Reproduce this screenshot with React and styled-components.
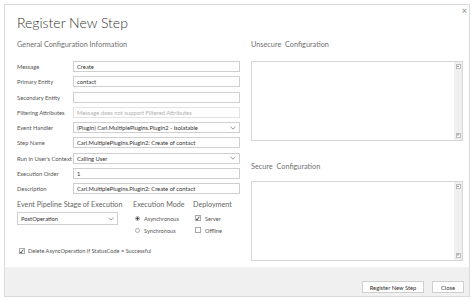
import React from 'react'
import styled, { createGlobalStyle } from 'styled-components'

const FIELDS = [
  { label: 'Message', value: 'Create' },
  { label: 'Primary Entity', value: 'contact' },
  { label: 'Secondary Entity', value: '' },
  { label: 'Filtering Attributes', value: 'Message does not support Filtered Attributes', disabled: true },
  { label: 'Event Handler', value: '(Plugin) Carl.MultiplePlugins.Plugin2 - Isolatable', select: true },
  { label: 'Step Name', value: 'Carl.MultiplePlugins.Plugin2: Create of contact' },
  { label: "Run in User's Context", value: 'Calling User', select: true },
  { label: 'Execution Order', value: '1' },
  { label: 'Description', value: 'Carl.MultiplePlugins.Plugin2: Create of contact' },
]

const GlobalStyle = createGlobalStyle`
  body {
    margin: 0;
    background: #fff;
    font-family: Lato, "Open Sans", sans-serif;
    color: #333;
  }
`

const Chevron = () => (
  <svg width="6" height="4" viewBox="0 0 6 4">
    <path d="M0.5 0.8 L3 3.2 L5.5 0.8" fill="none" stroke="#777" strokeWidth="0.8" />
  </svg>
)

const App = () => {
  return (
    <Page>
      <GlobalStyle />
      <Dialog>
        <CloseX>×</CloseX>
        <Header>
          <Title>Register New Step</Title>
        </Header>
        <Body>
          <Column>
            <SectionTitle>General Configuration Information</SectionTitle>
            <Rows>
              {FIELDS.map((f) => (
                <Row key={f.label}>
                  <Label>{f.label}</Label>
                  <Field disabled={f.disabled}>
                    <span>{f.value}</span>
                    {f.select && <Chevron />}
                  </Field>
                </Row>
              ))}
            </Rows>
            <Options>
              <OptionGroup>
                <GroupTitle>Event Pipeline Stage of Execution</GroupTitle>
                <StageSelect>
                  <span>PostOperation</span>
                  <Chevron />
                </StageSelect>
              </OptionGroup>
              <OptionGroup>
                <GroupTitle>Execution Mode</GroupTitle>
                <Choice><Radio checked />Asynchronous</Choice>
                <Choice><Radio />Synchronous</Choice>
              </OptionGroup>
              <OptionGroup>
                <GroupTitle>Deployment</GroupTitle>
                <Choice><Check checked>✓</Check>Server</Choice>
                <Choice><Check />Offline</Choice>
              </OptionGroup>
            </Options>
            <DeleteRow>
              <Check checked>✓</Check>
              Delete AsyncOperation if StatusCode = Successful
            </DeleteRow>
          </Column>
          <Column>
            <SectionTitle>Unsecure&nbsp; Configuration</SectionTitle>
            <TextArea>
              <ScrollTrack>
                <ScrollArrow>▲</ScrollArrow>
                <ScrollArrow>▼</ScrollArrow>
              </ScrollTrack>
            </TextArea>
            <SectionTitle $top={21} $bottom={9}>Secure&nbsp; Configuration</SectionTitle>
            <TextArea>
              <ScrollTrack>
                <ScrollArrow>▲</ScrollArrow>
                <ScrollArrow>▼</ScrollArrow>
              </ScrollTrack>
            </TextArea>
          </Column>
        </Body>
        <Footer>
          <Button $width={62}>Register New Step</Button>
          <Button $width={32}>Close</Button>
        </Footer>
      </Dialog>
    </Page>
  )
}

const Page = styled.div`
  padding: 4px;
`

const Dialog = styled.div`
  position: relative;
  width: 466px;
  height: 293px;
  box-sizing: border-box;
  border: 1px solid #dadada;
  display: flex;
  flex-direction: column;
  background: #fff;
`

const CloseX = styled.div`
  position: absolute;
  top: 1px;
  right: 2px;
  font-size: 9px;
  line-height: 10px;
  color: #888;
`

const Header = styled.div`
  padding: 9px 0 0 12px;
`

const Title = styled.h1`
  margin: 0;
  font-size: 14px;
  line-height: 18px;
  font-weight: 300;
  color: #333;
`

const Body = styled.div`
  display: grid;
  grid-template-columns: 223px 212px;
  column-gap: 11px;
  padding: 0 6px 0 12px;
`

const Column = styled.div`
  display: flex;
  flex-direction: column;
`

const SectionTitle = styled.div`
  margin-top: ${(p) => p.$top ?? 8}px;
  margin-bottom: ${(p) => p.$bottom ?? 11}px;
  font-size: 7.3px;
  line-height: 10px;
  color: #707070;
  white-space: nowrap;
`

const Rows = styled.div`
  display: flex;
  flex-direction: column;
  gap: 4.3px;
`

const Row = styled.div`
  display: grid;
  grid-template-columns: 56px 167px;
  align-items: center;
  height: 11px;
`

const Label = styled.div`
  font-size: 5.8px;
  color: #555;
  white-space: nowrap;
`

const Field = styled.div`
  box-sizing: border-box;
  height: 11px;
  border: 1px solid ${(p) => (p.disabled ? '#e2e2e2' : '#cfcfcf')};
  padding: 0 3px 0 3px;
  display: flex;
  align-items: center;
  justify-content: space-between;
  font-size: 5.8px;
  color: ${(p) => (p.disabled ? '#b0b0b0' : '#333')};
  white-space: nowrap;
  overflow: hidden;
`

const Options = styled.div`
  display: grid;
  grid-template-columns: 116px 60px 1fr;
  margin-top: 6px;
`

const OptionGroup = styled.div`
  display: flex;
  flex-direction: column;
`

const GroupTitle = styled.div`
  font-size: 7.2px;
  line-height: 10px;
  color: #666;
  white-space: nowrap;
  margin-bottom: 2px;
`

const StageSelect = styled(Field)`
  width: 101px;
  height: 13px;
`

const Choice = styled.div`
  display: flex;
  align-items: center;
  gap: 4px;
  height: 12px;
  padding-left: 2px;
  font-size: 5.6px;
  color: #555;
`

const Radio = styled.span`
  width: 5px;
  height: 5px;
  box-sizing: border-box;
  border-radius: 50%;
  border: 1px solid #aaa;
  background: ${(p) => (p.checked ? 'radial-gradient(circle, #333 45%, #fff 55%)' : '#fff')};
`

const Check = styled.span`
  width: 6px;
  height: 6px;
  box-sizing: border-box;
  border: 1px solid #aaa;
  display: flex;
  align-items: center;
  justify-content: center;
  font-size: 7px;
  line-height: 6px;
  color: #222;
`

const DeleteRow = styled.div`
  display: flex;
  align-items: center;
  gap: 3px;
  margin-top: 11px;
  padding-left: 2px;
  font-size: 5.6px;
  color: #555;
`

const TextArea = styled.div`
  box-sizing: border-box;
  height: 80px;
  border: 1px solid #d6d6d6;
  display: flex;
  justify-content: flex-end;
`

const ScrollTrack = styled.div`
  width: 8px;
  background: #efefef;
  display: flex;
  flex-direction: column;
  justify-content: space-between;
  align-items: center;
  padding: 2px 0;
`

const ScrollArrow = styled.span`
  width: 5px;
  height: 5px;
  box-sizing: border-box;
  border: 1px solid #bbb;
  background: #fff;
  font-size: 3px;
  line-height: 3px;
  color: #666;
  text-align: center;
`

const Footer = styled.div`
  margin-top: auto;
  height: 26px;
  background: #f0f0f0;
  display: flex;
  justify-content: flex-end;
  align-items: flex-end;
  gap: 8px;
  padding: 0 5px 3px 0;
`

const Button = styled.div`
  width: ${(p) => p.$width}px;
  height: 12px;
  box-sizing: border-box;
  border: 1px solid #cfcfcf;
  background: #fff;
  display: flex;
  align-items: center;
  justify-content: center;
  font-size: 5.8px;
  color: #333;
`

export default App
